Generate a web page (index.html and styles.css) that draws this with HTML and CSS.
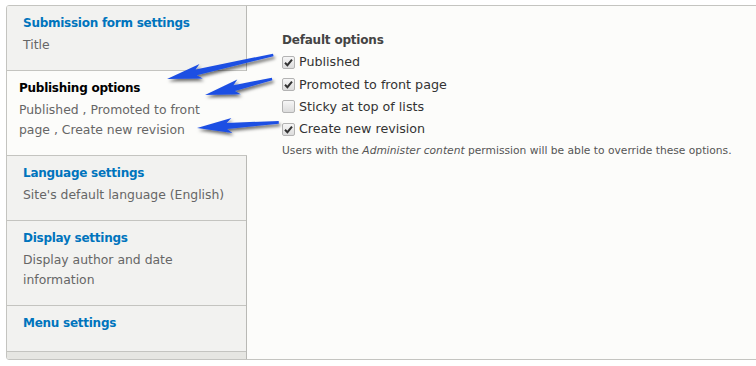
FILE: index.html
```html
<!DOCTYPE html>
<html>
<head>
<meta charset="utf-8">
<link rel="stylesheet" href="styles.css">
</head>
<body>
<div class="wrap">
  <ul class="tabs">
    <li class="tab">
      <div class="tab-title">Submission form settings</div>
      <div class="tab-summary">Title</div>
    </li>
    <li class="tab selected">
      <div class="tab-title">Publishing options</div>
      <div class="tab-summary">Published , Promoted to front page , Create new revision</div>
    </li>
    <li class="tab">
      <div class="tab-title">Language settings</div>
      <div class="tab-summary">Site's default language (English)</div>
    </li>
    <li class="tab">
      <div class="tab-title">Display settings</div>
      <div class="tab-summary">Display author and date information</div>
    </li>
    <li class="tab last">
      <div class="tab-title">Menu settings</div>
    </li>
  </ul>
  <div class="pane">
    <div class="legend">Default options</div>
    <div class="option"><span class="cb checked"><svg viewBox="0 0 13 13" width="13" height="13"><path d="M3 6.8 L5.4 9.2 L10 3.6" fill="none" stroke="#333" stroke-width="2"/></svg></span>Published</div>
    <div class="option"><span class="cb checked"><svg viewBox="0 0 13 13" width="13" height="13"><path d="M3 6.8 L5.4 9.2 L10 3.6" fill="none" stroke="#333" stroke-width="2"/></svg></span>Promoted to front page</div>
    <div class="option"><span class="cb"></span>Sticky at top of lists</div>
    <div class="option"><span class="cb checked"><svg viewBox="0 0 13 13" width="13" height="13"><path d="M3 6.8 L5.4 9.2 L10 3.6" fill="none" stroke="#333" stroke-width="2"/></svg></span>Create new revision</div>
    <div class="desc">Users with the <em>Administer content</em> permission will be able to override these options.</div>
  </div>
</div>
<svg class="arrows" width="756" height="366" viewBox="0 0 756 366">
  <defs>
    <filter id="sh" x="-20%" y="-50%" width="140%" height="200%">
      <feDropShadow dx="1.5" dy="2.5" stdDeviation="1.6" flood-color="#000" flood-opacity="0.55"/>
    </filter>
  </defs>
  <g fill="#1f4fe3" filter="url(#sh)">
    <polygon transform="translate(167 79) rotate(-12.76)" points="0,0 35,-7.5 30,-3 109,-1.3 109,1.3 30,3 35,7.5"/>
    <polygon transform="translate(205 95) rotate(-13.4)" points="0,0 35,-7.5 30,-3 69,-1.3 69,1.3 30,3 35,7.5"/>
    <polygon transform="translate(197 128) rotate(-4)" points="0,0 35,-7.5 30,-3 82,-1.4 82,1.4 30,3 35,7.5"/>
  </g>
</svg>
</body>
</html>
```

FILE: styles.css
```css
html, body {
  margin: 0;
  padding: 0;
  background: #fff;
}
body {
  font-family: "DejaVu Sans", "Liberation Sans", sans-serif;
  font-size: 12.4px;
  line-height: 20px;
  color: #333;
}
.wrap {
  margin: 5px 0 0 6px;
  width: 770px;
  height: 353px;
  border: 1px solid #c4c4c0;
  border-radius: 3px 0 0 3px;
  display: flex;
  overflow: hidden;
}
.tabs {
  list-style: none;
  margin: 0;
  padding: 0;
  width: 239px;
  flex: none;
  background: #e6e6e2;
  border-right: 1px solid #b9b9b5;
}
.tab {
  background: #f2f2f0;
  padding: 7px 16px 15px 16px;
  border-bottom: 1px solid #c4c4c0;
}
.tab.selected {
  background: #fcfcfa;
  padding-left: 12px;
  padding-right: 20px;
  margin-right: -1px;
}
.tab.last {
  padding-bottom: 16px;
}
.tab-title {
  font-size: 12px;
  font-weight: bold;
  letter-spacing: -0.26px;
  color: #0074bd;
  margin-bottom: 2px;
}
.tab.selected .tab-title {
  color: #000;
}
.tab-summary {
  color: #666;
}
.pane {
  flex: 1;
  background: #fcfcfa;
  padding: 24px 0 0 35px;
}
.legend {
  font-size: 12px;
  font-weight: bold;
  letter-spacing: -0.2px;
  line-height: 21px;
  color: #444;
}
.option {
  display: flex;
  align-items: center;
  height: 22.4px;
  font-size: 12.7px;
  color: #333;
}
.cb {
  width: 11px;
  height: 11px;
  border: 1px solid #b3b3b3;
  border-radius: 2px;
  background: linear-gradient(#f6f6f6, #dcdcdc);
  margin-right: 4px;
  position: relative;
  flex: none;
}
.cb svg {
  position: absolute;
  left: -1px;
  top: -1px;
}
.desc {
  margin-top: 1px;
  font-size: 10.7px;
  line-height: 18px;
  color: #555;
}
.arrows {
  position: absolute;
  left: 0;
  top: 0;
  pointer-events: none;
}
```
